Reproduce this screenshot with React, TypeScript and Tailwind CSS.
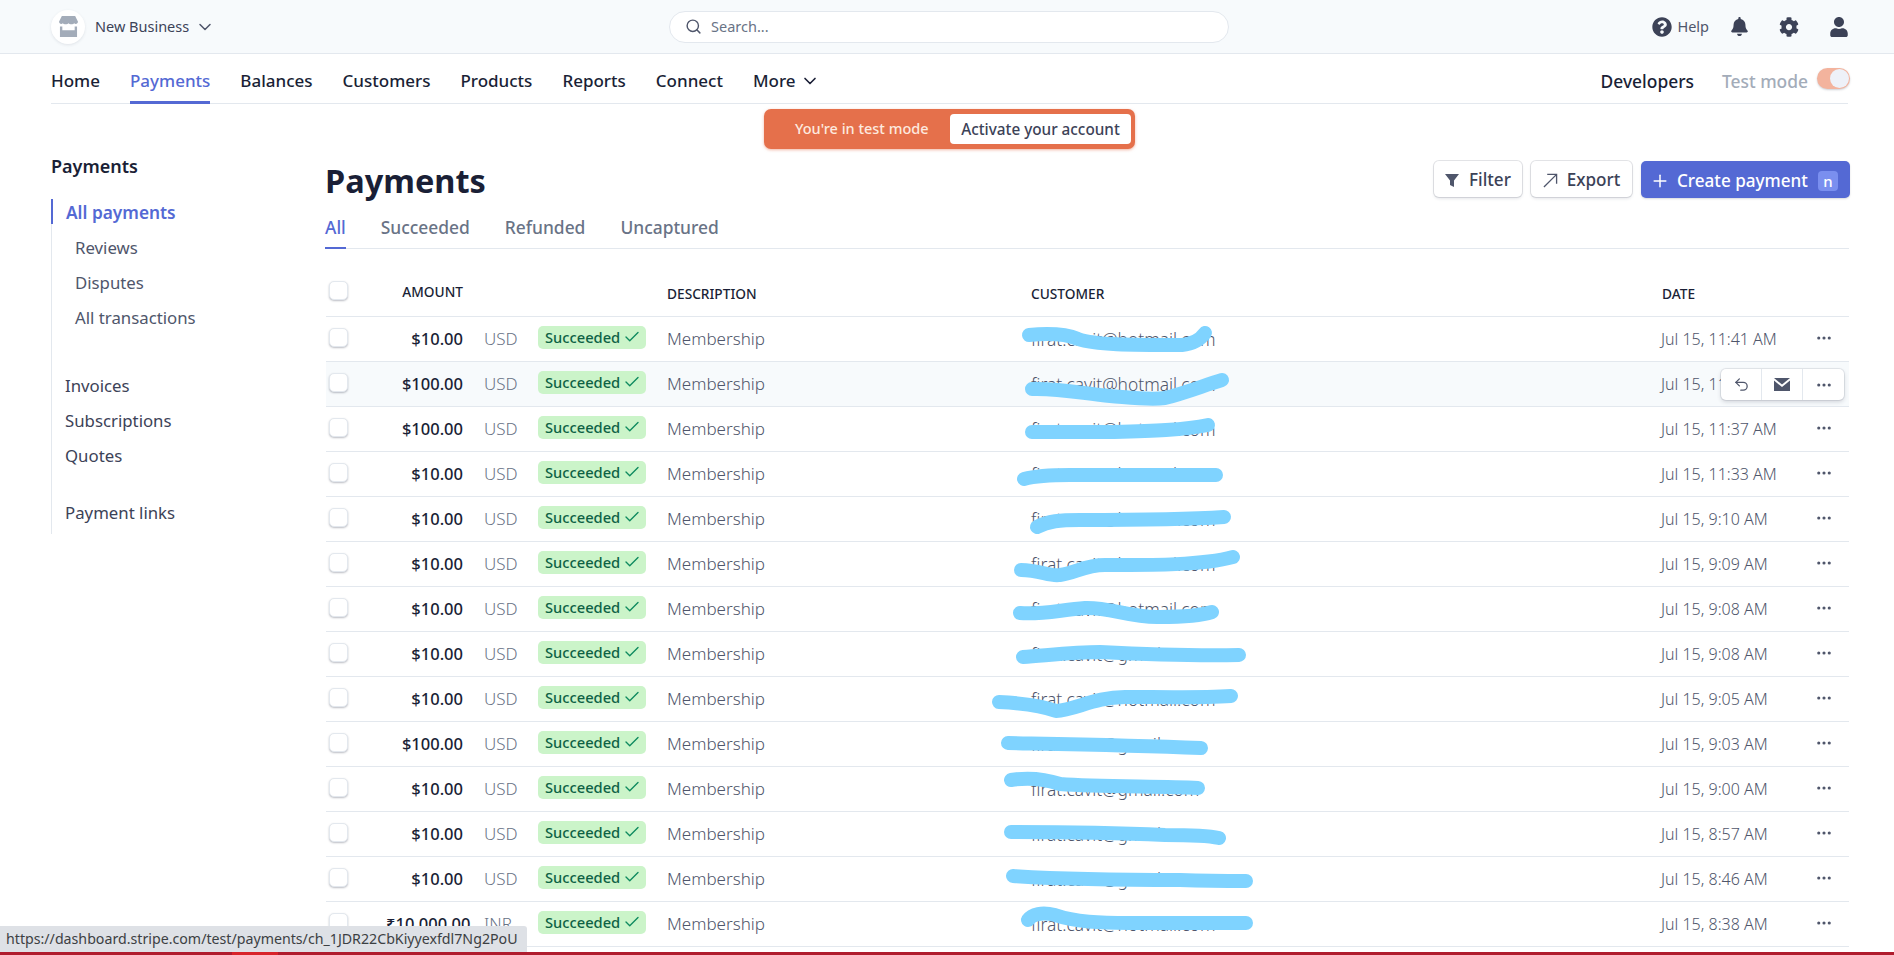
import React from 'react'
import { Check, ChevronDown, Plus, Search, Undo2 } from 'lucide-react'
import { FaBell, FaCog, FaQuestionCircle, FaUser } from 'react-icons/fa'

const NAV = ['Home', 'Payments', 'Balances', 'Customers', 'Products', 'Reports', 'Connect']
const HOTMAIL = 'firat.cavit@hotmail.com'
const GMAIL = 'firat.cavit@gmail.com'

const ROWS = [
  { amount: '$10.00', currency: 'USD', email: HOTMAIL, date: 'Jul 15, 11:41 AM' },
  { amount: '$100.00', currency: 'USD', email: HOTMAIL, date: 'Jul 15, 11:40 AM', hover: true },
  { amount: '$100.00', currency: 'USD', email: HOTMAIL, date: 'Jul 15, 11:37 AM' },
  { amount: '$10.00', currency: 'USD', email: HOTMAIL, date: 'Jul 15, 11:33 AM' },
  { amount: '$10.00', currency: 'USD', email: HOTMAIL, date: 'Jul 15, 9:10 AM' },
  { amount: '$10.00', currency: 'USD', email: HOTMAIL, date: 'Jul 15, 9:09 AM' },
  { amount: '$10.00', currency: 'USD', email: HOTMAIL, date: 'Jul 15, 9:08 AM' },
  { amount: '$10.00', currency: 'USD', email: GMAIL, date: 'Jul 15, 9:08 AM' },
  { amount: '$10.00', currency: 'USD', email: HOTMAIL, date: 'Jul 15, 9:05 AM' },
  { amount: '$100.00', currency: 'USD', email: GMAIL, date: 'Jul 15, 9:03 AM' },
  { amount: '$10.00', currency: 'USD', email: GMAIL, date: 'Jul 15, 9:00 AM' },
  { amount: '$10.00', currency: 'USD', email: GMAIL, date: 'Jul 15, 8:57 AM' },
  { amount: '$10.00', currency: 'USD', email: GMAIL, date: 'Jul 15, 8:46 AM' },
  { amount: '₹10,000.00', currency: 'INR', email: HOTMAIL, date: 'Jul 15, 8:38 AM' },
]

// marker strokes somebody drew over the customer emails, in page coordinates
const SCRIBBLES = [
  'M1029 335 C1050 333 1066 334 1078 339 C1095 345 1130 345 1182 345 C1192 344 1200 340 1205 333',
  'M1032 389 C1060 388 1085 394 1110 396 C1135 398 1150 400 1165 398 C1185 393 1205 385 1222 380',
  'M1032 432 C1070 432 1090 432 1114 432 C1150 431 1185 430 1208 425',
  'M1024 479 C1035 476 1050 475 1070 475 C1110 475 1170 475 1216 475',
  'M1037 527 C1048 521 1060 520 1080 520 C1130 520 1180 520 1224 517',
  'M1021 570 C1040 570 1050 577 1060 575 C1075 573 1085 565 1105 565 C1140 565 1200 566 1233 557',
  'M1020 613 C1040 615 1060 610 1085 608 C1110 607 1130 618 1160 617 C1185 617 1200 616 1212 612',
  'M1023 657 C1050 655 1075 652 1100 652 C1140 654 1190 656 1239 655',
  'M999 702 C1020 703 1040 705 1056 711 C1075 710 1095 697 1125 697 C1160 697 1200 698 1231 696',
  'M1008 743 C1060 744 1130 745 1201 748',
  'M1011 780 C1030 777 1045 779 1060 784 C1100 787 1160 786 1198 788',
  'M1011 832 C1060 832 1120 833 1165 835 C1190 835 1210 836 1219 838',
  'M1013 876 C1060 879 1120 880 1180 880 C1210 881 1230 881 1246 881',
  'M1028 920 C1032 914 1042 912 1055 915 C1075 922 1100 923 1130 923 C1170 923 1210 923 1246 923',
]

function StoreIcon() {
  return (
    <svg viewBox="0 0 20 22" className="w-[19px] h-[21px]">
      <path fill="#a3acb9" d="M3 0h14l3 6a2.400 2.400 0 0 1-4 1.600 3 3 0 0 1-3 1 3 3 0 0 1-3-1 3 3 0 0 1-3 1 3 3 0 0 1-3-1A2.400 2.400 0 0 1 0 6z" />
      <path fill="#a3acb9" d="M1 11h2.500v4h13v-4H19v11H1z" />
    </svg>
  )
}

function FilterIcon() {
  return (
    <svg viewBox="0 0 14 14" className="w-[14px] h-[14px]">
      <path fill="#4f566b" d="M0 1h14L9 7.500V14l-4-2V7.500z" />
    </svg>
  )
}

function ExportIcon() {
  return (
    <svg viewBox="0 0 16 16" className="w-[15px] h-[15px]" fill="none" stroke="#4f566b" strokeWidth="1.400">
      <path d="M1 15 14.500 1.500M4.500 1.500h10v10" />
    </svg>
  )
}

function MailIcon() {
  return (
    <svg viewBox="0 0 16 13" className="w-[16px] h-[13px]">
      <path fill="#4f566b" d="M0 0h16L8 6.500z" />
      <path fill="#4f566b" d="M0 2.500l8 6.500 8-6.500V13H0z" />
    </svg>
  )
}

function Dots() {
  return (
    <svg viewBox="0 0 16 4" className="w-[14px] h-[4px]">
      <circle cx="2" cy="2" r="1.800" fill="#4f566b" />
      <circle cx="8" cy="2" r="1.800" fill="#4f566b" />
      <circle cx="14" cy="2" r="1.800" fill="#4f566b" />
    </svg>
  )
}

function Checkbox() {
  return <span className="block w-[19px] h-[19px] rounded-[5px] bg-white border border-[#e3e8ee] shadow-[0_1px_2px_rgba(60,66,87,0.35)]" />
}

function TopBar() {
  return (
    <div className="h-[54px] flex items-center bg-[#f7fafc] border-b border-[#e3e8ee] pl-[51px] pr-[45px]">
      <div className="w-[618px] flex items-center">
        <span className="w-[34px] h-[34px] rounded-full bg-white shadow-[0_1px_3px_rgba(60,66,87,0.12)] flex items-center justify-center">
          <StoreIcon />
        </span>
        <span className="ml-[10px] text-[14.5px] text-[#3c4257]">New Business</span>
        <ChevronDown size={20} strokeWidth={1.800} className="ml-[6px] text-[#4f566b]" />
      </div>
      <div className="w-[560px] h-[32px] rounded-full bg-white border border-[#e3e8ee] flex items-center pl-[15px]">
        <Search size={17} strokeWidth={2} className="text-[#4f566b]" />
        <span className="ml-[9px] text-[14.5px] text-[#697386]">Search...</span>
      </div>
      <div className="flex-1 flex items-center justify-end">
        <FaQuestionCircle size={20} className="text-[#3c4257]" />
        <span className="ml-[5px] text-[14.5px] text-[#4f566b]">Help</span>
        <FaBell size={19} className="ml-[21px] text-[#3c4257]" />
        <FaCog size={20} className="ml-[30px] text-[#3c4257]" />
        <FaUser size={20} className="ml-[30px] text-[#3c4257]" />
      </div>
    </div>
  )
}

function NavBar() {
  return (
    <div className="mx-[51px] w-[1797px] h-[50px] border-b border-[#e3e8ee] flex items-stretch font-medium text-[#1a1f36]">
      <nav className="flex items-stretch gap-[30px] h-full text-[17px]">
        {NAV.map((item) =>
          item === 'Payments' ? (
            <span key={item} className="-mb-px flex items-center border-b-[3px] border-[#5469d4] text-[#5469d4] pt-[6px]">
              {item}
            </span>
          ) : (
            <span key={item} className="flex items-center pt-[5px]">
              {item}
            </span>
          )
        )}
        <span className="flex items-center gap-[4px] pt-[5px]">
          More
          <ChevronDown size={20} strokeWidth={2} />
        </span>
      </nav>
      <div className="ml-auto -mr-[2px] flex items-center pt-[5px] text-[17.4px]">
        <span>Developers</span>
        <span className="ml-[28px] text-[#a3acb9]">Test mode</span>
        <span className="ml-[9px] -mt-[5px] w-[33px] h-[21px] rounded-full bg-[#f3b39d] flex items-center justify-end pr-[1px] shadow-[0_1px_2px_rgba(60,66,87,0.25)]">
          <span className="w-[19px] h-[19px] rounded-full bg-[#eef1f8]" />
        </span>
      </div>
    </div>
  )
}

function Sidebar() {
  return (
    <aside className="w-[326px] shrink-0 pl-[51px] pt-[49px]">
      <h2 className="text-[18px] font-semibold leading-[26px] text-[#1a1f36]">Payments</h2>
      <div className="mt-[20px] w-[170px] border-l border-[#e3e8ee] pb-[4px] text-[16.8px] text-[#3c4257] leading-[35px]">
        <div className="-ml-px h-[25px] border-l-2 border-[#5469d4] pl-[13px] pt-[2px] flex items-center text-[17.3px] font-semibold text-[#5469d4]">All payments</div>
        <div className="mt-[6px] pl-[23px] text-[#4f566b]">Reviews</div>
        <div className="pl-[23px] text-[#4f566b]">Disputes</div>
        <div className="pl-[23px] text-[#4f566b]">All transactions</div>
        <div className="mt-[33px] pl-[13px]">Invoices</div>
        <div className="pl-[13px]">Subscriptions</div>
        <div className="pl-[13px]">Quotes</div>
        <div className="mt-[22px] pl-[13px]">Payment links</div>
      </div>
    </aside>
  )
}

const rowGrid = 'grid grid-cols-[60px_77px_75px_129px_364px_629px_156px_33px] items-center'

function PaymentRow({ row }: { row: (typeof ROWS)[number] }) {
  return (
    <div className={`${rowGrid} relative h-[45px] border-b border-[#e3e8ee] ${row.hover ? 'bg-[#f7fafc]' : ''}`}>
      <span className="pl-[3px] -mt-[4px]">
        <Checkbox />
      </span>
      <span className="text-right font-medium text-[#1a1f36] whitespace-nowrap">{row.amount}</span>
      <span className="pl-[21px] text-[17px] font-light text-[#697386]">{row.currency}</span>
      <span className="-mt-[3px]">
        <span className="inline-flex items-center h-[23px] w-[108px] pl-[7px] rounded-[5px] bg-[#cbf4c9] text-[14.7px] font-medium text-[#0e6245]">
          Succeeded
          <Check size={18} strokeWidth={1.800} className="ml-[3px] text-[#0e8a5f]" />
        </span>
      </span>
      <span className="text-[17px] font-light text-[#4f566b]">Membership</span>
      <span className="text-[17.400px] font-light text-[#4f566b]">{row.email}</span>
      <span className="pl-[1px] text-[16px] font-light text-[#4f566b] whitespace-nowrap">{row.date}</span>
      <span className="pl-[1px] -mt-[2px]">
        <Dots />
      </span>
      {row.hover && (
        <div className="absolute left-[1395px] top-[7px] w-[123px] h-[31px] grid grid-cols-[41px_41px_41px] bg-white rounded-[5px] shadow-[0_0_0_1px_rgba(60,66,87,0.1),0_2px_4px_rgba(60,66,87,0.2)]">
          <span className="flex items-center justify-center border-r border-[#e3e8ee]">
            <Undo2 size={17} strokeWidth={1.800} className="text-[#4f566b]" />
          </span>
          <span className="flex items-center justify-center border-r border-[#e3e8ee]">
            <MailIcon />
          </span>
          <span className="flex items-center justify-center">
            <Dots />
          </span>
        </div>
      )}
    </div>
  )
}

function Main() {
  return (
    <main className="w-[1523px] pt-[55px]">
      <div className="flex items-start justify-between h-[44px]">
        <h1 className="-ml-px text-[32.500px] leading-[44px] font-bold text-[#1a1f36]">Payments</h1>
        <div className="flex items-start mt-[2px] mr-[-1px] text-[17.1px] font-medium">
          <button className="w-[88px] h-[36px] pt-[2px] flex items-center justify-center gap-[10px] bg-white rounded-[5px] text-[#3c4257] shadow-[0_0_0_1px_rgba(60,66,87,0.14),0_2px_3px_rgba(60,66,87,0.12)]">
            <FilterIcon />
            Filter
          </button>
          <button className="ml-[9px] w-[101px] h-[36px] pt-[2px] flex items-center justify-center gap-[9px] bg-white rounded-[5px] text-[#3c4257] shadow-[0_0_0_1px_rgba(60,66,87,0.14),0_2px_3px_rgba(60,66,87,0.12)]">
            <ExportIcon />
            Export
          </button>
          <button className="ml-[9px] w-[209px] h-[37px] pt-[2px] flex items-center pl-[9px] bg-[#5469d4] rounded-[5px] text-white shadow-[0_1px_2px_rgba(60,66,87,0.2)]">
            <Plus size={20} strokeWidth={1.800} />
            <span className="ml-[7px]">Create payment</span>
            <span className="ml-auto mr-[12px] w-[20px] h-[20px] rounded-[4px] bg-[#7a8fef] text-[15px] leading-[20px] text-center">n</span>
          </button>
        </div>
      </div>
      <div className="-ml-px h-[46px] flex items-end gap-[35px] border-b border-[#e3e8ee] text-[17.4px] font-medium text-[#697386]">
        <span className="-mb-px border-b-2 border-[#5469d4] pb-[7px] text-[#5469d4]">All</span>
        <span className="-mb-px border-b-2 border-transparent pb-[7px]">Succeeded</span>
        <span className="-mb-px border-b-2 border-transparent pb-[7px]">Refunded</span>
        <span className="-mb-px border-b-2 border-transparent pb-[7px]">Uncaptured</span>
      </div>
      <div className={`${rowGrid} h-[68px] pt-[23px] border-b border-[#e3e8ee] text-[13.7px] font-medium text-[#1a1f36]`}>
        <span className="pl-[3px] -mt-[7px]">
          <Checkbox />
        </span>
        <span className="text-right -mt-[4px]">AMOUNT</span>
        <span />
        <span />
        <span>DESCRIPTION</span>
        <span>CUSTOMER</span>
        <span className="pl-[2px]">DATE</span>
        <span />
      </div>
      <div className="text-[16.5px]">
        {ROWS.map((row, i) => (
          <PaymentRow key={i} row={row} />
        ))}
      </div>
    </main>
  )
}

export default function App() {
  return (
    <div className="relative w-[1894px] h-[955px] overflow-hidden bg-white font-['Noto_Sans',sans-serif]">
      <TopBar />
      <NavBar />
      <div className="flex">
        <Sidebar />
        <Main />
      </div>

      <div className="absolute left-[764px] top-[109px] w-[371px] h-[40px] flex items-center rounded-[7px] bg-[#e5704b] pl-[31px] pr-[4px] shadow-[0_1px_3px_rgba(229,112,75,0.5)]">
        <span className="text-[14.5px] font-medium text-[#fde9df]">You're in test mode</span>
        <span className="ml-auto w-[181px] h-[30px] flex items-center justify-center rounded-[4px] bg-white text-[15.3px] font-medium text-[#3c4257]">
          Activate your account
        </span>
      </div>

      <svg className="absolute left-0 top-0 w-[1894px] h-[955px] pointer-events-none" viewBox="0 0 1894 955" fill="none">
        {SCRIBBLES.map((d, i) => (
          <path key={i} d={d} stroke="#7fd3ff" strokeWidth="14" strokeLinecap="round" strokeLinejoin="round" />
        ))}
      </svg>

      <div className="absolute left-0 bottom-[3px] w-[527px] h-[26px] bg-[#dee1e6] rounded-tr-[3px] pl-[6px] flex items-center text-[14.2px] text-[#3c4043] whitespace-nowrap">
        https://dashboard.stripe.com/test/payments/ch_1JDR22CbKiyyexfdl7Ng2PoU
      </div>
      <div className="absolute left-0 bottom-0 w-full h-[3px] bg-[#b01c2e]">
        <div className="ml-[232px] w-[46px] h-full bg-[#d8232a]" />
      </div>
    </div>
  )
}
